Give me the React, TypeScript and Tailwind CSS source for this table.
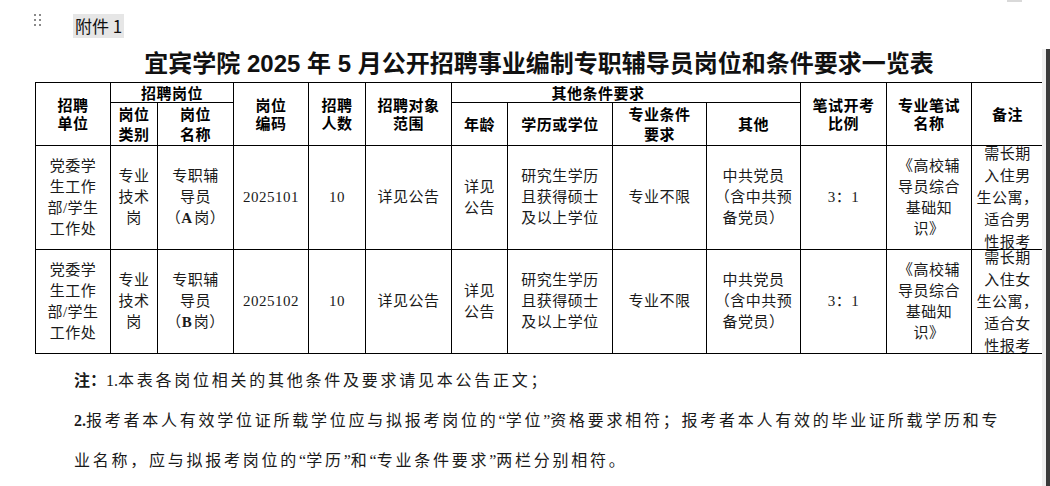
const serif = "font-['Liberation_Serif','Noto_Sans_CJK_SC',serif]";

const headCls =
  "border border-black text-center align-middle font-bold text-[15px] leading-[18px] tracking-[0.5px] text-black p-0 font-['Noto_Sans_CJK_SC',sans-serif]";
const cellCls =
  "border border-black text-center align-middle text-[15px] leading-[21px] tracking-[0.5px] text-[#1a1a1a] p-0 font-['Liberation_Serif','Noto_Sans_CJK_SC',serif]";

const rows = [
  { code: "2025101", post: "A", sex: "男" },
  { code: "2025102", post: "B", sex: "女" },
];

function Lines({ items }: { items: string[] }) {
  return (
    <>
      {items.map((t, i) => (
        <div key={i}>{t}</div>
      ))}
    </>
  );
}

function DragHandle() {
  return (
    <svg width="9" height="14" viewBox="0 0 9 14" className="text-[#8a8a8a]">
      {[0, 1, 2].map((r) =>
        [0, 1].map((c) => (
          <rect
            key={`${r}-${c}`}
            x={1 + c * 5}
            y={1 + r * 5}
            width="2"
            height="2"
            fill="currentColor"
          />
        ))
      )}
    </svg>
  );
}

export default function App() {
  return (
    <div className="relative w-[1050px] h-[486px] overflow-hidden bg-white">
      {/* top header with drag handle and label */}
      <div className="flex items-start pt-[13px] h-[38px]">
        <div className="ml-[33px]">
          <DragHandle />
        </div>
        <div className="ml-[31px] mt-[1px] h-[24px] px-[2px] bg-[#e6e6e6] text-[17px] leading-[24px] text-[#111] font-['Noto_Sans_CJK_SC',sans-serif]">
          附件 1
        </div>
      </div>

      <div className="ml-[35px] w-[1008px] mt-[8px] h-[36px] text-center text-[24px] leading-[36px] font-bold text-[#111] font-['Liberation_Sans','Noto_Sans_CJK_SC',sans-serif]">
        宜宾学院 2025 年 5 月公开招聘事业编制专职辅导员岗位和条件要求一览表
      </div>

      <table className="ml-[35px] w-[1008px] table-fixed border-collapse">
        <colgroup>
          <col className="w-[75px]" />
          <col className="w-[47px]" />
          <col className="w-[76px]" />
          <col className="w-[75px]" />
          <col className="w-[57px]" />
          <col className="w-[86px]" />
          <col className="w-[56px]" />
          <col className="w-[105px]" />
          <col className="w-[94px]" />
          <col className="w-[94px]" />
          <col className="w-[86px]" />
          <col className="w-[85px]" />
          <col className="w-[72px]" />
        </colgroup>
        <thead>
          <tr className="h-[20px]">
            <th rowSpan={2} className={headCls}>
              <Lines items={["招聘", "单位"]} />
            </th>
            <th colSpan={2} className={headCls}>
              招聘岗位
            </th>
            <th rowSpan={2} className={headCls}>
              <Lines items={["岗位", "编码"]} />
            </th>
            <th rowSpan={2} className={headCls}>
              <Lines items={["招聘", "人数"]} />
            </th>
            <th rowSpan={2} className={headCls}>
              <Lines items={["招聘对象", "范围"]} />
            </th>
            <th colSpan={4} className={headCls}>
              <div className="pr-[56px]">其他条件要求</div>
            </th>
            <th rowSpan={2} className={headCls}>
              <Lines items={["笔试开考", "比例"]} />
            </th>
            <th rowSpan={2} className={headCls}>
              <Lines items={["专业笔试", "名称"]} />
            </th>
            <th rowSpan={2} className={headCls}>
              备注
            </th>
          </tr>
          <tr className="h-[43px]">
            <th className={headCls}>
              <div className="leading-[20px]">
                <Lines items={["岗位", "类别"]} />
              </div>
            </th>
            <th className={headCls}>
              <div className="leading-[20px]">
                <Lines items={["岗位", "名称"]} />
              </div>
            </th>
            <th className={headCls}>年龄</th>
            <th className={headCls}>学历或学位</th>
            <th className={headCls}>
              <div className="leading-[20px]">
                <Lines items={["专业条件", "要求"]} />
              </div>
            </th>
            <th className={headCls}>其他</th>
          </tr>
        </thead>
        <tbody>
          {rows.map((r) => (
            <tr key={r.code} className="h-[104px]">
              <td className={cellCls}>
                <Lines items={["党委学", "生工作", "部/学生", "工作处"]} />
              </td>
              <td className={cellCls}>
                <Lines items={["专业", "技术", "岗"]} />
              </td>
              <td className={cellCls}>
                <div>专职辅</div>
                <div>导员</div>
                <div>
                  （<span className="font-bold tracking-[2px]">{r.post}</span>岗）
                </div>
              </td>
              <td className={cellCls}>{r.code}</td>
              <td className={cellCls}>10</td>
              <td className={cellCls}>详见公告</td>
              <td className={cellCls}>
                <Lines items={["详见", "公告"]} />
              </td>
              <td className={cellCls}>
                <Lines items={["研究生学历", "且获得硕士", "及以上学位"]} />
              </td>
              <td className={cellCls}>专业不限</td>
              <td className={cellCls}>
                <Lines items={["中共党员", "（含中共预", "备党员）"]} />
              </td>
              <td className={cellCls}>3：1</td>
              <td className={cellCls}>
                <Lines items={["《高校辅", "导员综合", "基础知", "识》"]} />
              </td>
              <td className={cellCls}>
                <div className="h-[102px] flex flex-col justify-center leading-[22px]">
                  <Lines
                    items={[
                      "需长期",
                      `入住${r.sex}`,
                      "生公寓，",
                      `适合${r.sex}`,
                      "性报考",
                    ]}
                  />
                </div>
              </td>
            </tr>
          ))}
        </tbody>
      </table>

      <div
        className={`mt-[7px] pl-[74px] text-[16px] leading-[40px] tracking-[2.75px] text-[#1a1a1a] whitespace-nowrap ${serif}`}
      >
        <div>
          <span className="font-bold tracking-normal">注：</span>
          <span className="tracking-normal">1.</span>本表各岗位相关的其他条件及要求请见本公告正文；
        </div>
        <div>
          <span className="font-bold tracking-normal">2.</span>报考者本人有效学位证所载学位应与拟报考岗位的<span className="tracking-normal">“</span>学位<span className="tracking-normal">”</span>资格要求相符；报考者本人有效的毕业证所载学历和专
        </div>
        <div>
          业名称，应与拟报考岗位的<span className="tracking-normal">“</span>学历<span className="tracking-normal">”</span>和<span className="tracking-normal">“</span>专业条件要求<span className="tracking-normal">”</span>两栏分别相符。
        </div>
      </div>

      {/* page edge overlays */}
      <div className="absolute top-0 left-[1007px] w-[15px] h-[2px] bg-[#d9d9d9]" />
      <div className="absolute top-[49px] bottom-0 left-[1042px] w-[4px] bg-[#efefef]" />
      <div className="absolute top-[49px] bottom-0 left-[1046px] w-[4px] bg-[#3a3a3a]" />
    </div>
  );
}
